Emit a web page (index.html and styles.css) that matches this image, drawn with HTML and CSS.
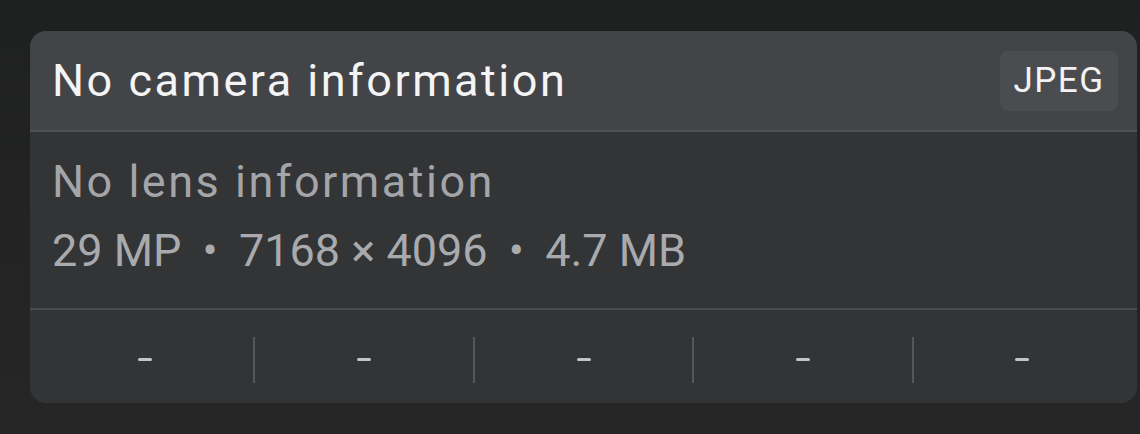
FILE: index.html
```html
<!DOCTYPE html>
<html lang="en">
<head>
<meta charset="utf-8">
<title>Photo info</title>
<link rel="stylesheet" href="styles.css">
</head>
<body>
<div class="card">
  <div class="card-header">
    <span class="title">No camera information</span>
    <span class="badge">JPEG</span>
  </div>
  <div class="card-body">
    <div class="lens">No lens information</div>
    <div class="specs">29 MP <span class="dot">•</span> 7168 × 4096 <span class="dot">•</span> 4.7 MB</div>
  </div>
  <div class="card-footer">
    <div class="cell"><span class="dash"></span></div>
    <div class="divider"></div>
    <div class="cell"><span class="dash"></span></div>
    <div class="divider"></div>
    <div class="cell"><span class="dash"></span></div>
    <div class="divider"></div>
    <div class="cell"><span class="dash"></span></div>
    <div class="divider"></div>
    <div class="cell"><span class="dash"></span></div>
  </div>
</div>
</body>
</html>
```

FILE: styles.css
```css
html, body {
  margin: 0;
  padding: 0;
}
body {
  width: 1140px;
  height: 434px;
  background: linear-gradient(#1f2020, #262626);
  font-family: Roboto, "Noto Sans", sans-serif;
  overflow: hidden;
  padding-top: 31px;
  box-sizing: border-box;
}
.card {
  margin-left: 30px;
  width: 1107px;
  height: 372px;
  border-radius: 16px;
  overflow: hidden;
  background: #333436;
  display: flex;
  flex-direction: column;
}
.card-header {
  height: 99px;
  background: #434447;
  border-bottom: 2px solid #505154;
  display: flex;
  align-items: center;
  justify-content: space-between;
  padding: 0 19px 0 22px;
  flex: none;
}
.title {
  color: #f4f4f5;
  font-size: 45px;
  line-height: 52px;
  letter-spacing: 2.5px;
}
.badge {
  width: 118px;
  height: 60px;
  border-radius: 8px;
  background: #4b4c50;
  color: #f2f2f3;
  font-size: 35px;
  line-height: 60px;
  text-align: center;
  letter-spacing: 1.5px;
}
.card-body {
  height: 178px;
  padding: 24px 22px 0;
  box-sizing: border-box;
  border-bottom: 2px solid #4b4c4f;
  flex: none;
}
.lens {
  color: #a4a5a9;
  font-size: 45px;
  line-height: 52px;
  letter-spacing: 2.5px;
}
.specs {
  margin-top: 17px;
  color: #a9aaae;
  font-size: 45px;
  line-height: 52px;
  letter-spacing: 0;
}
.dot {
  margin: 0 10px;
}
.card-footer {
  flex: 1;
  display: flex;
  align-items: center;
  padding: 6px 6px 0;
}
.cell {
  flex: 1;
  display: flex;
  justify-content: center;
  align-items: center;
  height: 46px;
}
.dash {
  width: 14px;
  height: 3px;
  border-radius: 2px;
  background: #c4c5c8;
}
.divider {
  width: 2px;
  height: 46px;
  background: #56575a;
}
```
